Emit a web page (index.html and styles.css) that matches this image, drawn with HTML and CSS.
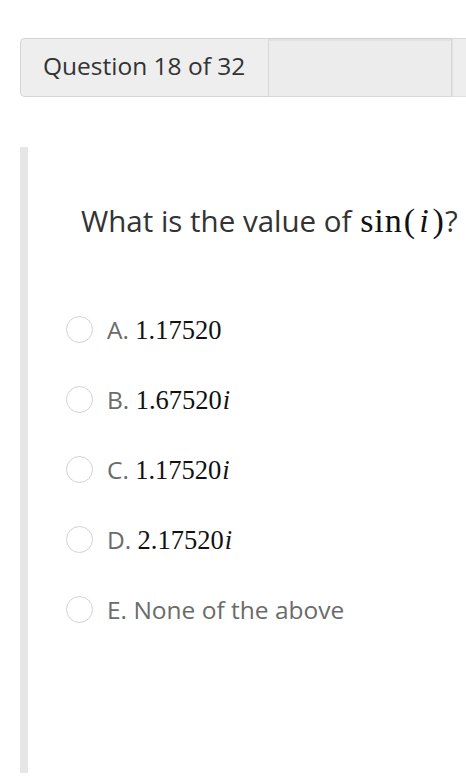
FILE: index.html
```html
<!DOCTYPE html>
<html lang="en">
<head>
<meta charset="utf-8">
<title>Question 18 of 32</title>
<link rel="stylesheet" href="styles.css">
</head>
<body>
<div class="header">
  <div class="tab tab-title">Question 18 of 32</div>
  <div class="tab tab-mid"></div>
  <div class="tab tab-last"></div>
</div>
<div class="main">
  <p class="question">What is the value of <span class="math q-math"><span class="rm fn">sin</span><span class="rm paren">(</span><span class="mi">i</span><span class="rm paren">)</span></span>?</p>
  <ul class="options">
    <li class="option"><span class="radio"></span><span class="label">A. <span class="math"><span class="rm">1.17520</span></span></span></li>
    <li class="option"><span class="radio"></span><span class="label">B. <span class="math"><span class="rm">1.67520</span><span class="mi">i</span></span></span></li>
    <li class="option"><span class="radio"></span><span class="label">C. <span class="math"><span class="rm">1.17520</span><span class="mi">i</span></span></span></li>
    <li class="option"><span class="radio"></span><span class="label">D. <span class="math"><span class="rm">2.17520</span><span class="mi">i</span></span></span></li>
    <li class="option"><span class="radio"></span><span class="label">E. None of the above</span></li>
  </ul>
</div>
</body>
</html>
```
FILE: styles.css
```css
html, body {
  margin: 0;
  padding: 0;
  background: #ffffff;
}
body {
  font-family: "Open Sans", "Noto Sans", sans-serif;
  color: #333333;
  overflow: hidden;
}
.header {
  display: flex;
  margin: 38px 0 0 20px;
  height: 59px;
}
.tab {
  box-sizing: border-box;
  height: 59px;
  background: #eeeeee;
  border-top: 1px solid #d4d4d4;
  border-bottom: 1px solid #d4d4d4;
}
.tab-title {
  width: 248px;
  display: flex;
  align-items: center;
  padding: 0 0 4px 22px;
  border-left: 1px solid #d4d4d4;
  border-radius: 5px 0 0 5px;
  font-size: 24.5px;
  color: #333333;
}
.tab-mid {
  width: 184px;
  background: #ececec;
  border: 1px solid #d8d8d8;
  border-top-color: #cfcfcf;
  box-shadow: inset 0 2px 0 #e2e2e2;
}
.tab-last {
  flex: 1;
  border-left: 1px solid #e0e0e0;
  border-top-color: #dadada;
  border-bottom-color: #e0e0e0;
}
.main {
  margin: 50px 0 0 20px;
  height: 626px;
  box-sizing: border-box;
  border-left: 8px solid #e6e6e6;
  padding: 55px 0 0 53px;
}
.question {
  margin: 0;
  font-size: 29.5px;
  line-height: 38px;
  height: 38px;
  color: #333333;
  white-space: nowrap;
}
.math {
  font-family: "Liberation Serif", "Times New Roman", serif;
  color: #111111;
}
.q-math {
  font-size: 34px;
  line-height: 1;
}
.fn {
  letter-spacing: 1px;
  padding-left: 1px;
}
.paren {
  padding: 0 1px;
}
.mi {
  font-style: italic;
  padding: 0 1px;
}
.q-math .mi {
  padding: 0 3px;
}
.options {
  list-style: none;
  margin: 76px 0 0 -15px;
  padding: 0;
  display: flex;
  flex-direction: column;
  gap: 43px;
}
.option {
  display: flex;
  align-items: center;
  gap: 14px;
  height: 27px;
}
.radio {
  box-sizing: border-box;
  width: 27px;
  height: 27px;
  flex: none;
  border: 1px solid #d2d2d2;
  border-radius: 50%;
  background: #ffffff;
}
.label {
  font-size: 24.5px;
  line-height: 27px;
  color: #6b6b6b;
  white-space: nowrap;
}
.label .math {
  font-size: 26.5px;
}
```
